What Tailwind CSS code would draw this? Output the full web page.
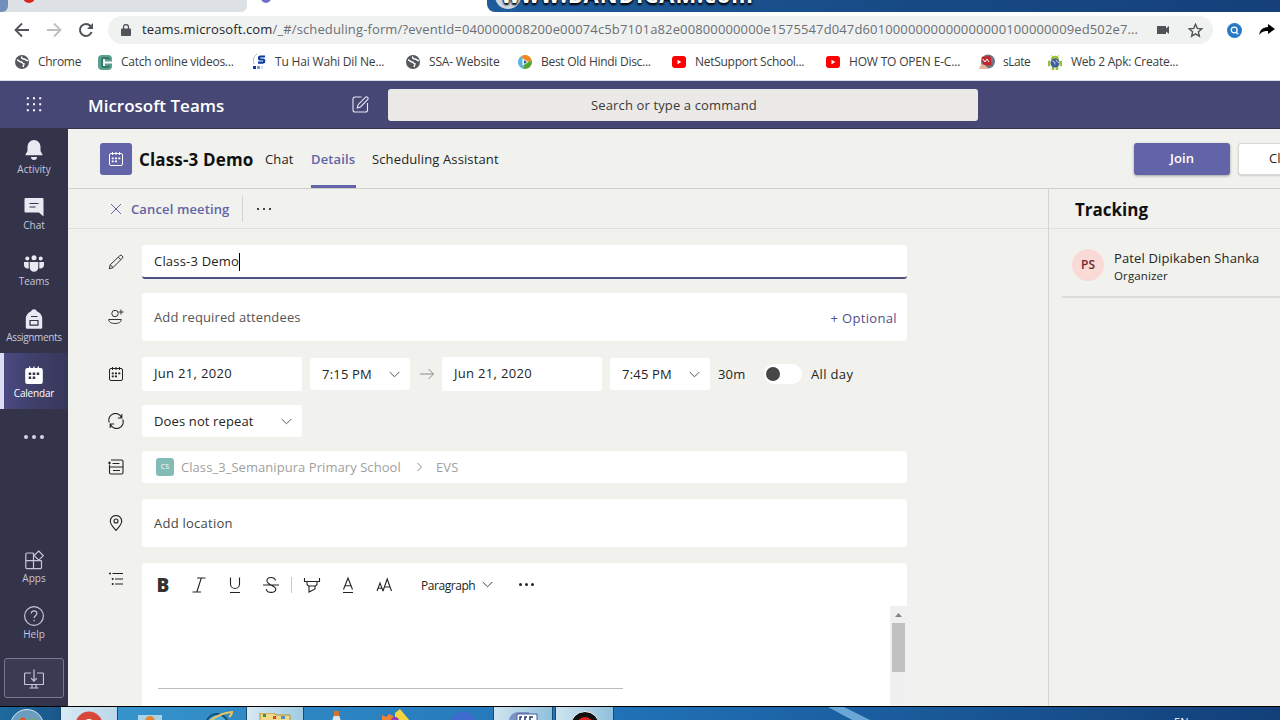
<!DOCTYPE html>
<html lang="en">

<head>
    <title>Class-3 Demo | Microsoft Teams</title>
    <meta charset="UTF-8">
    <meta name="viewport" content="width=device-width, initial-scale=1.0">
    <script src="https://cdn.jsdelivr.net/npm/@tailwindcss/browser@4"></script>
</head>

<body class="w-[1280px] h-[720px] overflow-hidden flex flex-col bg-white font-['Open_Sans',sans-serif] text-[13px] tracking-[0.13px] text-[#252423] whitespace-nowrap">

    <!-- Tab strip -->
    <div class="h-3 shrink-0 flex bg-white overflow-hidden">
        <div class="w-[247px] bg-[#dee1e6] rounded-br-md flex">
            <div class="w-2 bg-[#6f8fbd] rounded-br-md"></div>
            <div class="ml-[15px] -mt-[9px] w-3 h-3 rounded-full bg-[#d9231c]"></div>
        </div>
        <div class="ml-[14px] -mt-[7px] w-2.5 h-2.5 rounded-full bg-[#6f6fc9]"></div>
        <div class="ml-[216px] flex-1 rounded-bl-lg bg-linear-to-r from-[#1d5b9c] via-[#174b86] to-[#15407a] flex overflow-hidden">
            <div class="ml-2 -mt-[17px] w-[26px] h-[26px] rounded-full bg-[#cfd8e2] shrink-0"></div>
            <div class="-ml-[20px] -mt-[19px] h-[26px] leading-[26px] text-[22px] font-bold text-white tracking-[1px] [text-shadow:0_0_3px_#000,0_2px_2px_#000]">www.BANDICAM.com</div>
        </div>
    </div>

    <!-- Address bar -->
    <div class="h-9 shrink-0 flex items-center pl-[14px]">
        <svg class="w-4 h-4" viewBox="0 0 16 16" fill="none" stroke="#505357" stroke-width="1.8"><path d="M15 8H2M8 1.5L1.5 8L8 14.5" /></svg>
        <svg class="w-4 h-4 ml-4" viewBox="0 0 16 16" fill="none" stroke="#bcbec1" stroke-width="1.8"><path d="M1 8h13M8 1.5L14.5 8L8 14.5" /></svg>
        <svg class="w-4 h-4 ml-4" viewBox="0 0 16 16" fill="none" stroke="#505357" stroke-width="2"><path d="M13.6 10A6 6 0 1 1 12.5 4L14 5.6" /><path d="M15 1v6H9z" fill="#505357" stroke="none" /></svg>
        <div class="ml-[14px] w-[1105px] h-7 rounded-full bg-[#f0f2f2] flex items-center">
            <svg class="ml-[13px] w-2.5 h-3" viewBox="0 0 10 12"><path d="M1 4.5h8a1 1 0 0 1 1 1V11a1 1 0 0 1-1 1H1a1 1 0 0 1-1-1V5.500a1 1 0 0 1 1-1z" fill="#505357" /><path d="M2.500 5V3a2.500 2.500 0 0 1 5 0v2" fill="none" stroke="#505357" stroke-width="1.300" /></svg>
            <div class="ml-[11px] w-[1000px] tracking-[0.13px] text-[#6b6f73]"><span class="text-[#252628]">teams.microsoft.com</span>/_#/scheduling-form/?eventId=040000008200e00074c5b7101a82e00800000000e1575547d047d6010000000000000000100000009ed502e7...</div>
            <svg class="ml-[15px] w-3 h-2" viewBox="0 0 12 8" fill="#505357"><path d="M0 0h9v2.500L12 0v8L9 5.500V8H0z" /></svg>
            <svg class="ml-[19px] w-[15px] h-[15px]" viewBox="0 0 15 15" fill="none" stroke="#505357" stroke-width="1.400"><path d="M7.500 1.300l1.800 4.100 4.500.4-3.400 3 1 4.400-3.900-2.300-3.900 2.300 1-4.400-3.400-3 4.500-.4z" /></svg>
        </div>
        <svg class="ml-[14px] w-[15px] h-[15px] shrink-0" viewBox="0 0 15 15" fill="none"><circle cx="7.500" cy="7.500" r="7.500" fill="#2779c6" /><circle cx="7.200" cy="7" r="2.900" stroke="#fff" stroke-width="1.300" /><path d="M9.200 9.200l2 2" stroke="#fff" stroke-width="1.400" /></svg>
        <svg class="ml-[17px] w-4 h-3 shrink-0" viewBox="0 0 16 12"><path d="M9 0l7 5-7 5V7C5 6.700 2 8 .3 11 .5 6 4 3.300 9 3z" fill="#000" /></svg>
    </div>

    <!-- Bookmarks -->
    <div class="h-[33px] shrink-0 flex items-center pl-[15px] pb-1 text-[12px] tracking-[-0.18px] text-[#3c3d40] border-b border-[#d6dbe6]">
        <div class="w-[83px] flex items-center gap-[9px]">
            <svg class="w-[14px] h-[14px]" viewBox="0 0 14 14"><circle cx="7" cy="7" r="7" fill="#55585c" /><path d="M2 5c2 0 2 2 4 2s1 2 3 2l-1 3M7 1.500C6 3 7 4 9 4s2 2 4 1.500" fill="none" stroke="#fff" stroke-width="1.400" /></svg>
            <span class="tracking-[-0.3px]">Chrome</span>
        </div>
        <div class="w-[154px] flex items-center gap-[9px]">
            <svg class="w-[14px] h-[15px]" viewBox="0 0 14 15"><rect width="14" height="15" rx="4" fill="#58a08f" /><path d="M11 4.500V4q0-1-1.500-1h-4Q4 3 4 4.500v6Q4 12 5.500 12h4q1.500 0 1.500-1v-.5" stroke="#2f6b5e" stroke-width="1.500" fill="none" /><path d="M6 4v7M6 7.500h8" stroke="#fff" stroke-width="1.800" fill="none" /></svg>
            <span class="tracking-[-0.25px]">Catch online videos...</span>
        </div>
        <div class="w-[154px] flex items-center gap-2">
            <svg class="w-[15px] h-[16px]" viewBox="0 0 15 16"><path d="M5 0C1 3 1 7 2 10" stroke="#b4bbc6" fill="none" /><path d="M13 2.500H8.500Q7 2.500 7 4t1.500 1.500h2.300Q12.300 5.500 12.300 7t-1.500 1.700H6" stroke="#0b3ca0" stroke-width="2.200" fill="none" /><path d="M1 12h3v3H1z" fill="#0b3ca0" /><path d="M5 12h3v3H5z" fill="#6f9bd8" /><path d="M9 12h2v3H9z" fill="#cfdff3" /></svg>
            <span>Tu Hai Wahi Dil Ne...</span>
        </div>
        <div class="w-[112px] flex items-center gap-[9px]">
            <svg class="w-[14px] h-[14px]" viewBox="0 0 14 14"><circle cx="7" cy="7" r="7" fill="#55585c" /><path d="M2 5c2 0 2 2 4 2s1 2 3 2l-1 3M7 1.500C6 3 7 4 9 4s2 2 4 1.500" fill="none" stroke="#fff" stroke-width="1.400" /></svg>
            <span>SSA- Website</span>
        </div>
        <div class="w-[154px] flex items-center gap-[9px]">
            <svg class="w-[14px] h-[14px]" viewBox="0 0 14 14"><path d="M7 7L3 1.200A7 7 0 0 1 13.900 6z" fill="#f08a24" /><path d="M7 7l6.900-1A7 7 0 0 1 5 13.700z" fill="#55a630" /><path d="M7 7l-2 6.700A7 7 0 0 1 3 1.200z" fill="#5db4dc" /><path d="M4.500 3.500L10.500 7l-6 3.500z" fill="#fff" /><path d="M6 5.200L9 7 6 8.800z" fill="#17528a" /></svg>
            <span class="tracking-[-0.28px]">Best Old Hindi Disc...</span>
        </div>
        <div class="w-[154px] flex items-center gap-[9px]">
            <svg class="w-[14px] h-[12px]" viewBox="0 0 14 12"><rect width="14" height="12" rx="3" fill="#f00" /><path d="M5.500 3.700v4.600L9.300 6z" fill="#fff" /></svg>
            <span class="tracking-[-0.28px]">NetSupport School...</span>
        </div>
        <div class="w-[153px] flex items-center gap-[9px]">
            <svg class="w-[14px] h-[12px]" viewBox="0 0 14 12"><rect width="14" height="12" rx="3" fill="#f00" /><path d="M5.500 3.700v4.600L9.300 6z" fill="#fff" /></svg>
            <span>HOW TO OPEN E-C...</span>
        </div>
        <div class="w-[69px] flex items-center gap-2">
            <svg class="w-4 h-4" viewBox="0 0 16 16"><circle cx="9" cy="7.500" r="7" fill="#6d7683" /><path d="M2.500 3l9-1 1 9-8 1z" fill="#c0262c" /><path d="M4 5l2 3 2-3 2 3" stroke="#fff" fill="none" /><path d="M0 15l2-5 4 1 4 4z" fill="#e3b49f" /></svg>
            <span class="tracking-[-0.5px]">sLate</span>
        </div>
        <div class="flex items-center gap-[9px]">
            <svg class="w-[14px] h-[15px]" viewBox="0 0 14 15"><path d="M3 5a4 4 0 0 1 8 0zM0 6h2v5H0zM12 6h2v5h-2zM4 11h2v4H4zM8 11h2v4H8zM3 0l2 2M11 0L9 2" fill="#9abf3b" stroke="#9abf3b" stroke-width=".6" /><circle cx="7" cy="8" r="4.500" fill="#3f5f9c" /><path d="M4.500 6l2 1 .5 2.500M8 5l1.500 2L11 8" stroke="#c5d4ea" fill="none" /></svg>
            <span class="tracking-[-0.25px]">Web 2 Apk: Create...</span>
        </div>
    </div>

    <!-- Teams header -->
    <div class="h-12 shrink-0 flex items-center bg-[#464775] border-b border-[#33344a]">
        <svg class="ml-[26px] w-4 h-4" viewBox="0 0 16 16" fill="#fff"><path d="M.8.300h2v2h-2zM7 .3h2v2H7zM13.200.300h2v2h-2zM.8 6.300h2v2h-2zM7 6.300h2v2H7zM13.200 6.300h2v2h-2zM.8 12.300h2v2h-2zM7 12.300h2v2H7zM13.200 12.300h2v2h-2z" /></svg>
        <div class="ml-[46px] w-[264px] pt-0.5 text-[17px] tracking-normal font-semibold text-white">Microsoft Teams</div>
        <svg class="w-[17px] h-[17px]" viewBox="0 0 17 17" fill="none" stroke="#e6e6f2" stroke-width="1.100"><path d="M9.500 1H3A2 2 0 0 0 1 3v11a2 2 0 0 0 2 2h10.500a2 2 0 0 0 2-2V7" /><path d="M5.300 12l.8-3.300L13.600 1.200a1.200 1.200 0 0 1 1.700 0l.5.500a1.200 1.200 0 0 1 0 1.700L8.500 11z" /></svg>
        <div class="ml-[19px] w-[590px] h-8 rounded-[3px] bg-[#ebe9e8] flex items-center justify-center pr-[18px] pt-0.5 text-[#3a3938]">Search or type a command</div>
    </div>

    <div class="h-[577px] shrink-0 flex bg-[#f1f1ee]">

        <!-- App rail -->
        <nav class="w-[68px] shrink-0 bg-[#33334a] flex flex-col text-[10px] tracking-normal font-medium text-[#c6c7dd]">
            <div class="h-14 flex flex-col items-center pt-[11px] gap-0.5">
                <svg class="w-5 h-5" viewBox="0 0 20 20" fill="#e8e9f3"><path d="M10 0a6.500 6.500 0 0 1 6.500 6.500V11l2 3.500v.8H1.500v-.8l2-3.500V6.500A6.500 6.500 0 0 1 10 0zM7 17h6a3 3 0 0 1-6 0z" /></svg>
                <span class="leading-[14px]">Activity</span>
            </div>
            <div class="h-14 flex flex-col items-center pt-[11px] gap-0.5">
                <svg class="w-5 h-5" viewBox="0 0 20 20"><path d="M1.500 2h17a1 1 0 0 1 1 1v17.500L15 16.500H1.500a1 1 0 0 1-1-1V3a1 1 0 0 1 1-1z" fill="#e8e9f3" /><path d="M5.500 7.500h9M5.500 11h6" stroke="#33334a" stroke-width="1.200" /></svg>
                <span class="leading-[14px]">Chat</span>
            </div>
            <div class="h-14 flex flex-col items-center pt-[11px] gap-0.5">
                <svg class="w-5 h-5" viewBox="0 0 20 20" fill="#e8e9f3"><circle cx="3.300" cy="6.500" r="2" /><circle cx="10" cy="5.800" r="2.500" /><circle cx="16.700" cy="6.500" r="2" /><path d="M5.700 10h8.600v5.500a4.300 4.300 0 0 1-8.600 0zM0 10h4.700v6.500C2 17 0 15.500 0 13zM20 10h-4.700v6.500C18 17 20 15.500 20 13z" /></svg>
                <span class="leading-[14px]">Teams</span>
            </div>
            <div class="h-14 flex flex-col items-center pt-3 gap-px">
                <svg class="w-5 h-5" viewBox="0 0 20 20"><path d="M1.800 10a8.200 8.200 0 0 1 5-7.500Q8 .3 10 .3t3.200 2.200a8.200 8.200 0 0 1 5 7.500v8.500a1.300 1.300 0 0 1-1.300 1.300H3.100a1.300 1.300 0 0 1-1.300-1.300z" fill="#e8e9f3" /><path d="M7 7.500h6.500M6 11.500h8v4.700H6z" stroke="#33334a" stroke-width="1.200" fill="none" /></svg>
                <span class="leading-[14px] tracking-[-0.35px]">Assignments</span>
            </div>
            <div class="h-14 flex flex-col items-center pt-3 gap-px border-l-4 border-[#dcdcf5] pr-1 bg-linear-to-r from-[#4a4a82] via-[#3e3e68] to-[#38385c] text-white">
                <svg class="w-5 h-5" viewBox="0 0 20 20"><path d="M3.500 3H5V1.500h1.300V3h3V1.500h1.300V3h3V1.500H15V3h1.500A2.200 2.200 0 0 1 18.800 5.200v11.600a2.200 2.200 0 0 1-2.300 2.200h-13a2.200 2.200 0 0 1-2.300-2.200V5.200A2.200 2.200 0 0 1 3.500 3z" fill="#fff" /><path d="M8.700 7.500h2.500v2.500H8.700zM12.700 7.500h2.500v2.500h-2.500zM4.700 7.500h2.500v2.500H4.700zM4.700 11.500h2.500V14H4.700zM8.700 11.500h2.500V14H8.700z" fill="#33334a" /></svg>
                <span class="leading-[14px] tracking-[-0.2px]">Calendar</span>
            </div>
            <div class="h-14 flex items-center justify-center gap-1">
                <div class="w-1 h-1 rounded-full bg-[#d5d6e8]"></div>
                <div class="w-1 h-1 rounded-full bg-[#d5d6e8]"></div>
                <div class="w-1 h-1 rounded-full bg-[#d5d6e8]"></div>
            </div>
            <div class="mt-auto h-14 flex flex-col items-center pt-[11px] gap-px">
                <svg class="w-5 h-5" viewBox="0 0 20 20" fill="none" stroke="#c6c7dd" stroke-width="1.200"><path d="M9.500 3H3a1.200 1.200 0 0 0-1.200 1.200v13.300A1 1 0 0 0 3 18.700h13.300a1.200 1.200 0 0 0 1.200-1.200V10.500M9.500 3v15.700M1.800 10.700h15.700" /><path d="M14.700 1l4.600 4.600-4.600 4.600-4.600-4.600z" fill="#33334a" /></svg>
                <span class="leading-[14px]">Apps</span>
            </div>
            <div class="h-14 flex flex-col items-center pt-[11px] gap-px">
                <svg class="w-5 h-5" viewBox="0 0 20 20" fill="none" stroke="#c6c7dd" stroke-width="1.200"><circle cx="10" cy="10" r="9.400" /><path d="M7.300 7.500c0-3.700 5.700-3.500 5.600 0 0 2.200-2.800 2.300-2.800 4.500M10.100 13.700v1.500" /></svg>
                <span class="leading-[14px]">Help</span>
            </div>
            <div class="mx-1 mt-[7px] mb-2 h-10 shrink-0 rounded-[3px] border border-[#77788f] bg-[#3a3a52] flex items-center justify-center">
                <svg class="w-5 h-5 mt-0.5" viewBox="0 0 20 20" fill="none" stroke="#c6c7dd" stroke-width="1.200"><path d="M7 4H1.500a1 1 0 0 0-1 1v9.500a1 1 0 0 0 1 1h17a1 1 0 0 0 1-1V5a1 1 0 0 0-1-1H13M10 .5V12M7 9.200l3 3 3-3M8 15.500V19M12 15.500V19M5.500 19h9" /></svg>
            </div>
        </nav>

        <main class="w-[1212px] shrink-0 flex flex-col">
            <!-- Meeting header -->
            <div class="h-[60px] shrink-0 flex items-center pl-8 border-b border-[#cfcfcc]">
                <div class="w-8 h-8 rounded-[3px] bg-[#6264a7] flex items-center justify-center">
                    <svg class="w-4 h-4" viewBox="0 0 16 16"><path d="M3 2.500h10A1.500 1.500 0 0 1 14.500 4v9a1.500 1.500 0 0 1-1.500 1.500H3A1.500 1.500 0 0 1 1.500 13V4A1.500 1.500 0 0 1 3 2.500zM4.500 1v3M8 1v3M11.500 1v3" fill="none" stroke="#fff" /><path d="M7 6.500h2v1.700H7zM10.300 6.500h2v1.700h-2zM3.800 9.500h2v1.700h-2zM7 9.500h2v1.700H7zM3.800 6.500h2v1.700h-2z" fill="#fff" /></svg>
                </div>
                <div class="ml-[7px] w-[126px] pt-0.5 text-[17px] font-bold text-[#111] tracking-[0.15px]">Class-3 Demo</div>
                <div class="w-[46px] pt-[3px]">Chat</div>
                <div class="relative w-[45px] h-[59px] flex items-center pt-[3px] font-semibold text-[#6264a7]">Details
                    <div class="absolute left-0 bottom-0 w-full h-[3px] bg-[#6264a7]"></div>
                </div>
                <div class="ml-4 pt-[3px]">Scheduling Assistant</div>
                <button class="ml-auto w-24 h-8 pt-px rounded-[3px] bg-[#6264a7] text-white font-semibold shadow-[0_1px_3px_rgba(0,0,0,0.35)]">Join</button>
                <button class="ml-2 w-[42px] h-8 pt-px overflow-hidden rounded-l-[3px] border border-r-0 border-[#d8d8d6] bg-white pl-[30px] text-left text-[#252423] shadow-[0_1px_2px_rgba(0,0,0,0.15)]">Close</button>
            </div>

            <div class="flex-1 min-h-0 flex">
                <section class="w-[981px] shrink-0 flex flex-col border-r border-[#d4d4d1]">
                    <div class="h-10 shrink-0 flex items-center pl-[42px] border-b border-[#dededb]">
                        <svg class="w-3 h-3" viewBox="0 0 12 12" stroke="#6264a7"><path d="M1 1l10 10M11 1L1 11" /></svg>
                        <div class="ml-[9px] w-[111px] pt-0.5 font-semibold text-[#6264a7]">Cancel meeting</div>
                        <div class="w-px h-[26px] bg-[#d4d4d1]"></div>
                        <div class="ml-[14px] flex gap-1">
                            <div class="w-0.5 h-0.5 bg-[#444]"></div>
                            <div class="w-0.5 h-0.5 bg-[#444]"></div>
                            <div class="w-0.5 h-0.5 bg-[#444]"></div>
                        </div>
                    </div>

                    <div class="flex-1 min-h-0 pt-4 pl-10 flex flex-col">
                        <div class="flex items-center gap-[18px]">
                            <svg class="w-4 h-4" viewBox="0 0 16 16" fill="none" stroke="#333"><path d="M1.200 14.800l1-4L11.800 1.700a1.500 1.500 0 0 1 2.200 0l.3.300a1.500 1.500 0 0 1 0 2.200L5 13.600zM10.300 3.200l2.500 2.500M2.300 10.800l2.800 2.700" /></svg>
                            <div class="w-[765px] h-[34px] rounded-[3px] border-b-2 border-[#50517f] bg-white px-3 pt-0.5 flex items-center tracking-[0.2px]">Class-3 Demo<div class="w-px h-[18px] bg-black"></div></div>
                        </div>
                        <div class="mt-3.5 flex items-center gap-[18px]">
                            <svg class="w-4 h-4" viewBox="0 0 16 16" fill="none" stroke="#333"><circle cx="7" cy="4.500" r="3.200" /><path d="M.7 10.500h12.600c0 2.500-2.300 4-6.300 4s-6.300-1.500-6.300-4zM13 .5v5M10.500 3h5" /></svg>
                            <div class="w-[765px] h-12 rounded-[3px] bg-white pl-3 pr-2.5 pt-0.5 flex items-center justify-between text-[#555452]"><span>Add required attendees</span><span class="text-[#50518a] pt-0.5 tracking-[0.35px]">+ Optional</span></div>
                        </div>
                        <div class="mt-4 flex items-center">
                            <svg class="w-4 h-4" viewBox="0 0 16 16"><path d="M3 2.500h10A1.500 1.500 0 0 1 14.500 4v9a1.500 1.500 0 0 1-1.500 1.500H3A1.500 1.500 0 0 1 1.500 13V4A1.500 1.500 0 0 1 3 2.500zM4.500 1v3M8 1v3M11.500 1v3" fill="none" stroke="#222" /><path d="M7 6.500h2v1.700H7zM10.300 6.500h2v1.700h-2zM3.800 9.500h2v1.700h-2zM7 9.500h2v1.700H7zM3.800 6.500h2v1.700h-2z" fill="#222" /></svg>
                            <div class="ml-[18px] w-40 h-[34px] rounded-[3px] bg-white px-3 flex items-center tracking-[0.32px]">Jun 21, 2020</div>
                            <div class="ml-2 w-[100px] h-8 rounded-[3px] bg-white pl-3 pr-2.5 flex items-center justify-between"><span class="pt-0.5 tracking-[0.2px]">7:15 PM</span><svg class="w-[11px] h-[11px]" viewBox="0 0 11 11" fill="none" stroke="#555"><path d="M.7 3l4.800 4.800L10.300 3" /></svg></div>
                            <svg class="ml-2.5 w-[14px] h-3" viewBox="0 0 14 12" fill="none" stroke="#8a8a88"><path d="M0 6h13.300M8.500 1l5 5-5 5" /></svg>
                            <div class="ml-2 w-40 h-[34px] rounded-[3px] bg-white px-3 flex items-center tracking-[0.32px]">Jun 21, 2020</div>
                            <div class="ml-2 w-[100px] h-8 rounded-[3px] bg-white pl-3 pr-2.5 flex items-center justify-between"><span class="pt-0.5 tracking-[0.2px]">7:45 PM</span><svg class="w-[11px] h-[11px]" viewBox="0 0 11 11" fill="none" stroke="#555"><path d="M.7 3l4.800 4.800L10.300 3" /></svg></div>
                            <div class="ml-2 w-[46px] pt-0.5">30m</div>
                            <div class="w-[38px] h-5 rounded-full bg-white flex items-center pl-0.5 pb-px"><div class="w-[14px] h-[14px] rounded-full bg-[#484644]"></div></div>
                            <div class="ml-[9px] pt-0.5 tracking-[0.35px]">All day</div>
                        </div>
                        <div class="mt-3.5 flex items-center gap-[18px]">
                            <svg class="w-4 h-4" viewBox="0 0 16 16" fill="none" stroke="#222" stroke-width="1.100"><path d="M1.300 9.500A6.500 6.500 0 0 1 13.500 4.500M14.700 6.500A6.500 6.500 0 0 1 2.500 11.500M13.800 1v4h-4M2.200 15v-4h4" /></svg>
                            <div class="w-40 h-8 rounded-[3px] bg-white pl-3 pr-2.5 flex items-center justify-between"><span class="pt-0.5">Does not repeat</span><svg class="w-[11px] h-[11px]" viewBox="0 0 11 11" fill="none" stroke="#555"><path d="M.7 3l4.800 4.800L10.300 3" /></svg></div>
                        </div>
                        <div class="mt-3.5 flex items-center gap-[18px]">
                            <svg class="w-4 h-4" viewBox="0 0 16 16" fill="none" stroke="#222" stroke-width="1.100"><path d="M3 1h10.500A1.500 1.500 0 0 1 15 2.500v11a1.500 1.500 0 0 1-1.500 1.500H3A1.500 1.500 0 0 1 1.500 13.500V6M4.500 4.500h7M1.500 8h13.500M5 11.500h7M0 4h3M1.500 2.500v3" /></svg>
                            <div class="w-[765px] h-8 rounded-[3px] bg-white pl-3.5 flex items-center text-[#a09f9d]">
                                <div class="w-[18px] h-[18px] rounded-[3px] bg-[#83bcb7] text-white text-[7px] flex items-center justify-center">CS</div>
                                <div class="ml-[7px] w-[235px] pt-0.5 tracking-[0.06px]">Class_3_Semanipura Primary School</div>
                                <svg class="w-2 h-2.5" viewBox="0 0 8 10" fill="none" stroke="#8a8a88"><path d="M1.500 1l4 4-4 4" /></svg>
                                <div class="ml-3 pt-0.5">EVS</div>
                            </div>
                        </div>
                        <div class="mt-4 flex items-center gap-[18px]">
                            <svg class="w-4 h-4" viewBox="0 0 16 16" fill="none" stroke="#222" stroke-width="1.100"><path d="M8 15.500C5.500 12.500 2.300 9.300 2.300 6.200a5.700 5.700 0 0 1 11.400 0c0 3.100-3.200 6.300-5.700 9.300z" /><circle cx="8" cy="6" r="2" /></svg>
                            <div class="w-[765px] h-12 rounded-[3px] bg-white pl-3 pt-0.5 flex items-center tracking-[0.25px] text-[#484644]">Add location</div>
                        </div>

                        <!-- Description editor -->
                        <div class="mt-4 flex-1 min-h-0 flex gap-[18px]">
                            <svg class="mt-2 w-4 h-4" viewBox="0 0 16 16" fill="none" stroke="#222" stroke-width="1.100"><path d="M4.500 2.500H15M7 8h8M7 13h8M1 2.500h2M3.700 8h2M3.700 13h2M2 1.500v2M4.700 7v2M4.700 12v2" /></svg>
                            <div class="w-[765px] rounded-t-[3px] bg-white flex flex-col">
                                <div class="h-[43px] shrink-0 flex items-center pl-3 text-[#252423]">
                                    <div class="w-[18px] text-center text-[19px] leading-5 font-extrabold text-[#333]">B</div>
                                    <svg class="ml-[18px] w-[18px] h-[18px]" viewBox="0 0 18 18" fill="none" stroke="#252423" stroke-width="1.100"><path d="M7 2h8.500M2.500 16H11M11.300 2L6.800 16" /></svg>
                                    <svg class="ml-[18px] w-[18px] h-[18px]" viewBox="0 0 18 18" fill="none" stroke="#252423" stroke-width="1.100"><path d="M4.500 1.500V8a4.500 4.500 0 0 0 9 0V1.500M4 16.500h10" /></svg>
                                    <svg class="ml-[18px] w-[18px] h-[18px]" viewBox="0 0 18 18" fill="none" stroke="#252423" stroke-width="1.100"><path d="M13.500 4.500C12.500.5 5 .5 5 4.800c0 2 1.500 3 4 4.200 3 1.300 4.800 2 4.800 4.200 0 4.300-9 4.300-9.500-.2M1 9h16" /></svg>
                                    <div class="ml-[11px] w-px h-4 bg-[#c8c8c6]"></div>
                                    <svg class="ml-[11px] w-[18px] h-[18px]" viewBox="0 0 18 18" fill="none" stroke="#252423" stroke-width="1.100"><path d="M1.500 2v3.500h15V2M4 5.500v3l1.500 1.500h7L14 8.500v-3M6 10v6l6-3v-3" /></svg>
                                    <svg class="ml-[18px] w-[18px] h-[18px]" viewBox="0 0 18 18" fill="none" stroke="#252423" stroke-width="1.100"><path d="M4.500 13.500L9 2l4.500 11.500M6 9.800h6M4 16.500h10" /></svg>
                                    <svg class="ml-[18px] w-[18px] h-[18px]" viewBox="0 0 18 18" fill="none" stroke="#252423" stroke-width="1.100"><path d="M2 15l3-8 3 8M3 12.300h4M8 15l4.200-12L16.500 15M9.400 11h5.700" /></svg>
                                    <div class="ml-[28px] w-[60px] pt-0.5 text-[12px] tracking-[-0.45px]">Paragraph</div>
                                    <svg class="ml-px w-[11px] h-[11px] shrink-0" viewBox="0 0 11 11" fill="none" stroke="#444"><path d="M.7 3l4.800 4.800L10.300 3" /></svg>
                                    <div class="ml-[26px] flex gap-[3px]">
                                        <div class="w-[3px] h-[3px] rounded-full bg-[#252423]"></div>
                                        <div class="w-[3px] h-[3px] rounded-full bg-[#252423]"></div>
                                        <div class="w-[3px] h-[3px] rounded-full bg-[#252423]"></div>
                                    </div>
                                </div>
                                <div class="flex-1 min-h-0 flex justify-between pl-4">
                                    <div class="mt-[82px] w-[465px] h-px bg-[#bdbdbd]"></div>
                                    <div class="w-[17px] bg-[#f0f0f0] flex flex-col items-center">
                                        <svg class="mt-[7px] w-[7px] h-1" viewBox="0 0 7 4"><path d="M3.500 0L7 4H0z" fill="#868686" /></svg>
                                        <div class="mt-1.5 w-[13px] h-[49px] bg-[#c1c1c1]"></div>
                                    </div>
                                </div>
                            </div>
                        </div>
                    </div>
                </section>

                <!-- Tracking -->
                <aside class="w-[231px] shrink-0">
                    <div class="h-10 border-b border-[#dededb] flex items-center pl-[26px] pt-0.5 text-[17px] tracking-normal font-bold text-[#111]">Tracking</div>
                    <div class="ml-[13px] h-[69px] border-b-2 border-[#dcdcda] pl-2.5 pt-1 flex items-center gap-[10px]">
                        <div class="w-8 h-8 rounded-full bg-[#fadad6] flex items-center justify-center pt-px text-[12px] font-semibold text-[#6e2a30]">PS</div>
                        <div class="pt-1">
                            <div class="leading-[18px]">Patel Dipikaben Shanka</div>
                            <div class="leading-[17px] text-[11.500px]">Organizer</div>
                        </div>
                    </div>
                </aside>
            </div>
        </main>
    </div>

    <!-- Taskbar -->
    <div class="h-3.5 shrink-0 border-t border-black bg-linear-to-r from-[#3b9bd0] via-[#2070b5] to-[#123f78] flex overflow-hidden">
        <div class="w-[60px] shrink-0 bg-linear-to-r from-[#1e6a9e] to-[#1a5789] pl-2.5">
            <svg class="mt-0.5 w-[34px] h-3" viewBox="0 0 34 12"><circle cx="17" cy="17" r="16.500" fill="#6d9dbd" stroke="#cde4f2" /><path d="M9 11q4-5 7-1v4H8z" fill="#e0592a" /><path d="M18 10q4 2 8-1l-1 5h-8z" fill="#76b83f" /></svg>
        </div>
        <div class="w-[58px] shrink-0 border-x border-[#194a70] bg-linear-to-r from-[#d8e9f3] to-[#b8d8e9] flex justify-center">
            <svg class="mt-1 w-7 h-2.5" viewBox="0 0 28 10"><circle cx="14" cy="14" r="13.500" fill="#d9473a" /><circle cx="14" cy="14" r="6" fill="#fff" /></svg>
        </div>
        <div class="w-[128px] shrink-0 flex">
            <svg class="ml-5 mt-2 w-6 h-1.5" viewBox="0 0 24 6"><rect width="24" height="6" fill="#a9d3ea" /><circle cx="12" cy="6" r="5" fill="#e78632" /></svg>
            <svg class="ml-[42px] mt-1 w-8 h-2.5" viewBox="0 0 32 10"><circle cx="13" cy="14" r="11" fill="#55add9" stroke="#164f77" stroke-width="2" /><path d="M6 10Q16 2 28 1q0 3-3 5" fill="none" stroke="#ecc75b" stroke-width="2" /></svg>
        </div>
        <div class="w-[58px] shrink-0 border-x border-[#194a70] bg-linear-to-r from-[#d8e9f3] to-[#9fcbe2] flex justify-center">
            <svg class="mt-1.5 w-8 h-2" viewBox="0 0 32 8"><path d="M1 0h14l2 2h14v6H1z" fill="#f1d98b" stroke="#b38e32" /><path d="M4 1h3v3H4z" fill="#38934c" /><path d="M14 3h3v3h-3z" fill="#cf4732" /><path d="M22 3h4v3h-4z" fill="#4c8fc9" /></svg>
        </div>
        <div class="w-[189px] shrink-0 flex">
            <svg class="ml-[25px] mt-1 w-4 h-2.5" viewBox="0 0 16 10"><path d="M5 4h5l2 6H3z" fill="#dce6ee" /><path d="M5 0h5v5H5z" fill="#d17432" /></svg>
            <svg class="ml-9 mt-0.5 w-8 h-3" viewBox="0 0 32 12"><path d="M1 12V6l4 2 3-3 4 2 2 5z" fill="#f08332" /><path d="M14 4l5-4 10 12H14z" fill="#f6d53a" /><circle cx="14" cy="12" r="4" fill="#8d3db5" /></svg>
            <svg class="ml-9 mt-1 w-7 h-2.5" viewBox="0 0 28 10"><circle cx="14" cy="14" r="13.500" fill="#3e6ace" /></svg>
        </div>
        <div class="w-[60px] shrink-0 border-x border-[#194a70] bg-linear-to-r from-[#cfe4f0] to-[#8fc0dd] flex justify-center">
            <svg class="mt-1 w-8 h-2.5" viewBox="0 0 32 10"><path d="M2 10Q3 1 12 1h10v9z" fill="#7d93c4" /><path d="M10 3h20v7H10z" fill="#fff" stroke="#435d9c" /><path d="M13 10V6h2M18 10V6h2M23 10V6h3" stroke="#1d3474" fill="none" stroke-width="1.500" /></svg>
        </div>
        <div class="ml-0.5 w-[59px] shrink-0 border-x border-[#194a70] bg-linear-to-r from-[#cfe4f0] to-[#8fc0dd] flex justify-center">
            <svg class="mt-1 w-8 h-2.5" viewBox="0 0 32 10"><circle cx="16" cy="15" r="14.500" fill="#111" stroke="#fff" /><circle cx="16" cy="14" r="8" fill="#e0201d" /></svg>
        </div>
        <svg class="ml-[212px] w-[50px] h-3.5 shrink-0" viewBox="0 0 50 14"><path d="M2 0h16l28 14H28z" fill="#8cc4ec" fill-opacity=".7" /></svg>
        <div class="ml-[298px] mt-2 text-[11px] leading-[13px] text-white">EN</div>
    </div>
</body>

</html>
